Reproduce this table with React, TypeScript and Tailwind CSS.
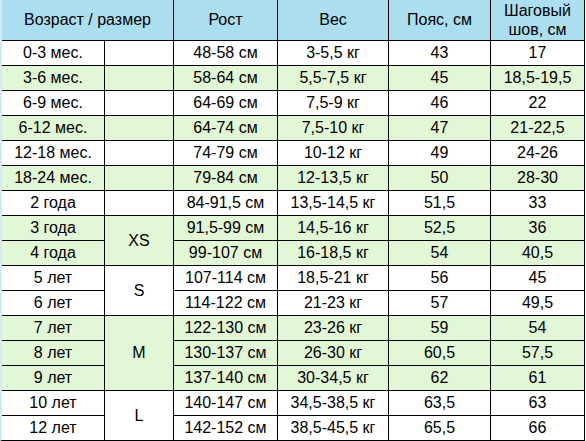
const rows: {
  age: string;
  size?: { label: string; span: number };
  noSize?: boolean;
  height: string;
  weight: string;
  waist: string;
  inseam: string;
  green: boolean;
}[] = [
  { age: "0-3 мес.", noSize: true, height: "48-58 см", weight: "3-5,5 кг", waist: "43", inseam: "17", green: false },
  { age: "3-6 мес.", noSize: true, height: "58-64 см", weight: "5,5-7,5 кг", waist: "45", inseam: "18,5-19,5", green: true },
  { age: "6-9 мес.", noSize: true, height: "64-69 см", weight: "7,5-9 кг", waist: "46", inseam: "22", green: false },
  { age: "6-12 мес.", noSize: true, height: "64-74 см", weight: "7,5-10 кг", waist: "47", inseam: "21-22,5", green: true },
  { age: "12-18 мес.", noSize: true, height: "74-79 см", weight: "10-12 кг", waist: "49", inseam: "24-26", green: false },
  { age: "18-24 мес.", noSize: true, height: "79-84 см", weight: "12-13,5 кг", waist: "50", inseam: "28-30", green: true },
  { age: "2 года", noSize: true, height: "84-91,5 см", weight: "13,5-14,5 кг", waist: "51,5", inseam: "33", green: false },
  { age: "3 года", size: { label: "XS", span: 2 }, height: "91,5-99 см", weight: "14,5-16 кг", waist: "52,5", inseam: "36", green: true },
  { age: "4 года", height: "99-107 см", weight: "16-18,5 кг", waist: "54", inseam: "40,5", green: true },
  { age: "5 лет", size: { label: "S", span: 2 }, height: "107-114 см", weight: "18,5-21 кг", waist: "56", inseam: "45", green: false },
  { age: "6 лет", height: "114-122 см", weight: "21-23 кг", waist: "57", inseam: "49,5", green: false },
  { age: "7 лет", size: { label: "M", span: 3 }, height: "122-130 см", weight: "23-26 кг", waist: "59", inseam: "54", green: true },
  { age: "8 лет", height: "130-137 см", weight: "26-30 кг", waist: "60,5", inseam: "57,5", green: true },
  { age: "9 лет", height: "137-140 см", weight: "30-34,5 кг", waist: "62", inseam: "61", green: true },
  { age: "10 лет", size: { label: "L", span: 2 }, height: "140-147 см", weight: "34,5-38,5 кг", waist: "63,5", inseam: "63", green: false },
  { age: "12 лет", height: "142-152 см", weight: "38,5-45,5 кг", waist: "65,5", inseam: "66", green: false },
];

const spanClass: Record<number, string> = {
  2: "row-span-2",
  3: "row-span-3",
};

function Cell({ children, green, className = "" }: { children?: React.ReactNode; green: boolean; className?: string }) {
  return (
    <div
      className={`flex items-center justify-center whitespace-nowrap ${
        green ? "bg-[#e2f7d5]" : "bg-white"
      } ${className}`}
    >
      {children}
    </div>
  );
}

export default function App() {
  return (
    <div className="h-[441px] w-[586px] bg-white font-['Liberation_Sans',Arial,sans-serif] text-[16px] text-black">
      <div className="grid w-[585px] grid-cols-[102px_68px_103px_110px_101px_93px] grid-rows-[40px_repeat(16,24px)] gap-px border-b border-l-2 border-r border-b-black border-l-[#d3e9f3] border-r-black bg-black">
        <div className="col-span-2 flex items-center justify-center bg-[#abdff0]">Возраст / размер</div>
        <div className="flex items-center justify-center bg-[#abdff0]">Рост</div>
        <div className="flex items-center justify-center bg-[#abdff0]">Вес</div>
        <div className="flex items-center justify-center bg-[#abdff0]">Пояс, см</div>
        <div className="flex items-center justify-center bg-[#abdff0] text-center leading-[19px]">
          Шаговый
          <br />
          шов, см
        </div>

        {rows.map((r) => (
          <div key={r.age} className="contents">
            <Cell green={r.green}>{r.age}</Cell>
            {r.noSize ? <Cell green={r.green} /> : null}
            {r.size ? (
              <Cell green={r.green} className={spanClass[r.size.span]}>
                {r.size.label}
              </Cell>
            ) : null}
            <Cell green={r.green}>{r.height}</Cell>
            <Cell green={r.green}>{r.weight}</Cell>
            <Cell green={r.green}>{r.waist}</Cell>
            <Cell green={r.green}>{r.inseam}</Cell>
          </div>
        ))}
      </div>
    </div>
  );
}
